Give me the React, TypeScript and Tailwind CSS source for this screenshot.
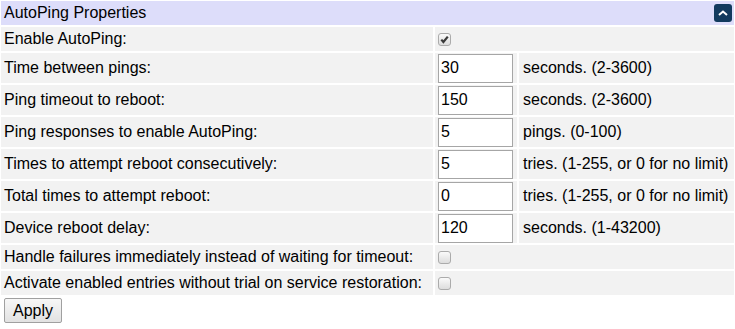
import React from 'react';

interface Row {
    label: string;
    value: string;
    hint: string;
}

const rows: Row[] = [
    { label: 'Time between pings:', value: '30', hint: 'seconds. (2-3600)' },
    { label: 'Ping timeout to reboot:', value: '150', hint: 'seconds. (2-3600)' },
    { label: 'Ping responses to enable AutoPing:', value: '5', hint: 'pings. (0-100)' },
    { label: 'Times to attempt reboot consecutively:', value: '5', hint: 'tries. (1-255, or 0 for no limit)' },
    { label: 'Total times to attempt reboot:', value: '0', hint: 'tries. (1-255, or 0 for no limit)' },
    { label: 'Device reboot delay:', value: '120', hint: 'seconds. (1-43200)' },
];

function Check({ checked }: { checked?: boolean }) {
    return (
        <span className="inline-flex items-center justify-center w-[13px] h-[13px] rounded-[3px] border border-[#ababab] bg-gradient-to-b from-[#fafafa] to-[#dddddd] align-middle">
            {checked && (
                <svg width="9" height="9" viewBox="0 0 9 9">
                    <path d="M1.3 4.6 L3.4 7 L7.8 1.6" stroke="#3a3a3a" strokeWidth="2.2" fill="none" />
                </svg>
            )}
        </span>
    );
}

export default function App() {
    const cell = 'bg-[#f2f2f2] px-[3px]';
    return (
        <div className="w-[735px] bg-white text-[16px] text-black" style={{ fontFamily: '"Liberation Sans", Arial, sans-serif' }}>
            <table className="w-[737px] -ml-[1px] border-separate border-spacing-[2px] -mt-[1px]">
                <tbody>
                    <tr className="h-[24px]">
                        <td colSpan={3} className="bg-[#ddddfa] px-[3px]">
                            <div className="flex items-center justify-between">
                                <span>AutoPing Properties</span>
                                <span className="w-[18px] h-[18px] rounded-[3px] bg-[#123a5e] flex items-center justify-center mr-[-1px]">
                                    <svg width="10" height="6" viewBox="0 0 10 6">
                                        <path d="M1 5 L5 1.5 L9 5" stroke="#fff" strokeWidth="2" fill="none" />
                                    </svg>
                                </span>
                            </div>
                        </td>
                    </tr>
                    <tr className="h-[24px]">
                        <td className={`${cell} w-[432px]`}>Enable AutoPing:</td>
                        <td colSpan={2} className={cell}>
                            <Check checked />
                        </td>
                    </tr>
                    {rows.map(r => (
                        <tr key={r.label} className="h-[30px]">
                            <td className={cell}>{r.label}</td>
                            <td className={`${cell} w-[82px]`}>
                                <input
                                    readOnly
                                    value={r.value}
                                    className="w-[75px] h-[29px] border border-[#a6a6a6] bg-white px-[2px] text-[16px] outline-none"
                                    style={{ fontFamily: '"Liberation Sans", Arial, sans-serif' }}
                                />
                            </td>
                            <td className={`${cell} pl-[4px]`}>{r.hint}</td>
                        </tr>
                    ))}
                    <tr className="h-[24px]">
                        <td className={cell}>Handle failures immediately instead of waiting for timeout:</td>
                        <td colSpan={2} className={cell}>
                            <Check />
                        </td>
                    </tr>
                    <tr className="h-[24px]">
                        <td className={cell}>Activate enabled entries without trial on service restoration:</td>
                        <td colSpan={2} className={cell}>
                            <Check />
                        </td>
                    </tr>
                </tbody>
            </table>
            <div className="pl-[4px] pt-[1px]">
                <button className="h-[25px] px-[8px] border border-[#a0a0a0] rounded-[2px] bg-gradient-to-b from-[#f7f7f7] to-[#e2e2e2] text-[16px] leading-none">
                    Apply
                </button>
            </div>
        </div>
    );
}
